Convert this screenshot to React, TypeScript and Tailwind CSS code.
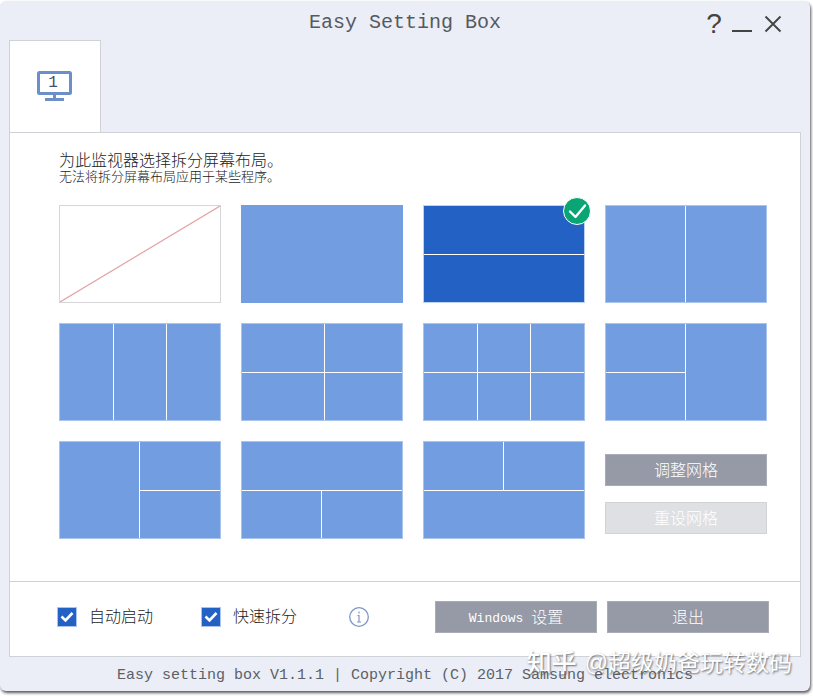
import { useState } from 'react'
import type { ReactNode } from 'react'
import clsx from 'clsx'

type Layout = {
  id: string
  label: string
  grid: string
  cells: string[]
}

const LAYOUTS: Layout[] = [
  { id: 'full', label: 'Full screen', grid: '', cells: [''] },
  { id: 'rows-2', label: 'Two rows', grid: 'grid-rows-[48fr_47fr]', cells: ['', ''] },
  { id: 'cols-2', label: 'Two columns', grid: 'grid-cols-[79fr_80fr]', cells: ['', ''] },
  { id: 'cols-3', label: 'Three columns', grid: 'grid-cols-[53fr_52fr_53fr]', cells: ['', '', ''] },
  {
    id: 'grid-4',
    label: 'Four panes',
    grid: 'grid-cols-[82fr_77fr] grid-rows-[48fr_47fr]',
    cells: ['', '', '', ''],
  },
  {
    id: 'grid-6',
    label: 'Six panes',
    grid: 'grid-cols-[53fr_52fr_53fr] grid-rows-[48fr_47fr]',
    cells: ['', '', '', '', '', ''],
  },
  {
    id: 'split-left',
    label: 'Left column split',
    grid: 'grid-cols-[79fr_80fr] grid-rows-[48fr_47fr]',
    cells: ['', 'row-span-2', ''],
  },
  {
    id: 'split-right',
    label: 'Right column split',
    grid: 'grid-cols-[79fr_80fr] grid-rows-[48fr_47fr]',
    cells: ['row-span-2', '', ''],
  },
  {
    id: 'split-bottom',
    label: 'Bottom row split',
    grid: 'grid-cols-[79fr_80fr] grid-rows-[48fr_47fr]',
    cells: ['col-span-2', '', ''],
  },
  {
    id: 'split-top',
    label: 'Top row split',
    grid: 'grid-cols-[79fr_80fr] grid-rows-[48fr_47fr]',
    cells: ['', '', 'col-span-2'],
  },
]

const MonitorIcon = () => (
  <svg width="36" height="31" viewBox="0 0 36 31" fill="none" stroke="#6c8fc9" aria-hidden="true">
    <rect x="1.5" y="1.5" width="32" height="21" rx="1" strokeWidth="3" />
    <path d="M17.5 24v4" strokeWidth="3" />
    <path d="M8 28.5h19" strokeWidth="3" />
  </svg>
)

const SelectedBadge = () => (
  <svg
    className="absolute -top-[9px] -right-[7px]"
    width="28"
    height="28"
    viewBox="0 0 28 28"
    fill="none"
    aria-hidden="true"
  >
    <circle cx="14" cy="14" r="13.5" fill="#0aa574" stroke="#fff" />
    <path
      d="M7 14.5l5.5 5.5L22 8.5"
      stroke="#fff"
      strokeWidth="2.4"
      strokeLinecap="round"
      strokeLinejoin="round"
    />
  </svg>
)

const LayoutTile = ({
  layout,
  selected,
  onSelect,
}: {
  layout: Layout
  selected: boolean
  onSelect: () => void
}) => (
  <button
    type="button"
    aria-label={layout.label}
    aria-pressed={selected}
    onClick={onSelect}
    className={clsx(
      'relative h-[98px] border',
      selected
        ? 'border-[#bcd2f3]'
        : layout.id === 'full'
          ? 'border-[#729de0]'
          : 'border-[#a9c5ee]'
    )}
  >
    <span className={clsx('grid h-full w-full gap-px bg-white', layout.grid)}>
      {layout.cells.map((span, i) => (
        <span key={i} className={clsx(span, selected ? 'bg-[#2461c5]' : 'bg-[#729de0]')} />
      ))}
    </span>
    {selected && <SelectedBadge />}
  </button>
)

const EmptyTile = ({ onSelect }: { onSelect: () => void }) => (
  <button
    type="button"
    aria-label="No layout"
    onClick={onSelect}
    className="h-[98px] border border-[#d6d6d8] bg-white"
  >
    <svg className="h-full w-full" viewBox="0 0 160 96" preserveAspectRatio="none" aria-hidden="true">
      <path d="M0 96L160 0" stroke="#e2a3a3" strokeWidth="1.2" />
    </svg>
  </button>
)

const ActionButton = ({
  children,
  disabled,
  className,
}: {
  children: ReactNode
  disabled?: boolean
  className?: string
}) => (
  <button
    type="button"
    disabled={disabled}
    className={clsx(
      'flex h-8 items-center justify-center border pt-0.5 text-base leading-none font-light text-white',
      disabled ? 'border-[#d2d3d6] bg-[#dfe0e4]' : 'border-[#a9abb5] bg-[#9699a6]',
      className
    )}
  >
    {children}
  </button>
)

const CheckOption = ({ id, label }: { id: string; label: string }) => {
  const [checked, setChecked] = useState(true)
  return (
    <div className="flex items-center gap-3">
      <span className="relative h-5 w-5">
        <input
          id={id}
          type="checkbox"
          checked={checked}
          onChange={(e) => setChecked(e.target.checked)}
          className="block h-5 w-5 appearance-none border border-[#a9c5ee] bg-white checked:bg-[#2461c5]"
        />
        {checked && (
          <svg
            className="pointer-events-none absolute inset-0"
            width="20"
            height="20"
            viewBox="0 0 20 20"
            fill="none"
            aria-hidden="true"
          >
            <path d="M4.5 9.5l4 4 7-7.5" stroke="#fff" strokeWidth="2.6" />
          </svg>
        )}
      </span>
      <label htmlFor={id} className="text-base leading-5 font-light text-[#222]">
        {label}
      </label>
    </div>
  )
}

const TitleBar = () => (
  <header className="grid h-[39px] grid-cols-[1fr_auto_1fr] items-center text-[#444]">
    <h1 className="col-start-2 pt-1 font-['Liberation_Mono',monospace] text-xl leading-6 text-[#555a60]">
      Easy Setting Box
    </h1>
    <div className="flex items-center justify-end gap-2.5 pt-1.5 pr-[19px]">
      <button
        type="button"
        aria-label="Help"
        className="w-4 font-['Liberation_Sans',sans-serif] text-[28px] leading-7"
      >
        ?
      </button>
      <button type="button" aria-label="Minimize">
        <svg width="20" height="20" viewBox="0 0 20 20" stroke="currentColor" strokeWidth="2">
          <path d="M0 17h20" />
        </svg>
      </button>
      <button type="button" aria-label="Close" className="pl-0.5">
        <svg width="18" height="18" viewBox="0 0 18 18" stroke="currentColor" strokeWidth="1.9">
          <path d="M1.5 1.5l15 15M16.5 1.5l-15 15" />
        </svg>
      </button>
    </div>
  </header>
)

function App() {
  const [selectedId, setSelectedId] = useState('rows-2')

  return (
    <div className="relative min-h-screen bg-white pt-px pr-[3px] font-['Liberation_Sans','Noto_Sans_CJK_SC',sans-serif]">
      <div className="rounded-md bg-[#ebeef6] px-[9px] shadow-[1px_2px_3px_rgba(0,0,0,0.65)]">
        <TitleBar />

        <nav className="flex">
          <button
            type="button"
            className="relative flex h-[92px] w-[92px] items-center justify-center border border-b-0 border-[#cfd2d6] bg-white"
          >
            <MonitorIcon />
            <span className="absolute inset-x-0 top-[34px] pr-1 text-center font-['Liberation_Mono',monospace] text-base leading-4 text-[#444f68]">
              1
            </span>
          </button>
        </nav>

        <main className="border border-[#cfd2d6] bg-white">
          <section className="pt-5 pr-[33px] pb-[42px] pl-[49px]">
            <h2 className="text-base leading-4 font-light text-[#222]">
              为此监视器选择拆分屏幕布局。
            </h2>
            <p className="text-[13px] leading-4 font-light text-[#222]">
              无法将拆分屏幕布局应用于某些程序。
            </p>

            <div className="mt-5 grid grid-cols-4 gap-5">
              <EmptyTile onSelect={() => setSelectedId('')} />
              {LAYOUTS.map((layout) => (
                <LayoutTile
                  key={layout.id}
                  layout={layout}
                  selected={layout.id === selectedId}
                  onSelect={() => setSelectedId(layout.id)}
                />
              ))}
              <div className="flex flex-col gap-4 pt-[13px]">
                <ActionButton>调整网格</ActionButton>
                <ActionButton disabled>重设网格</ActionButton>
              </div>
            </div>
          </section>

          <section className="flex items-center border-t border-[#cfd2d6] pt-[19px] pr-[31px] pb-[23px] pl-[47px]">
            <div className="flex items-center gap-12">
              <CheckOption id="auto-start" label="自动启动" />
              <CheckOption id="quick-split" label="快速拆分" />
              <button type="button" aria-label="Info" className="ml-1">
                <svg width="20" height="20" viewBox="0 0 20 20" fill="none" stroke="#7b98c8">
                  <circle cx="10" cy="10" r="9.3" strokeWidth="1.3" />
                  <path d="M10 4.5v2M8.5 8.5H10V15M8 15h4" strokeWidth="1.2" />
                </svg>
              </button>
            </div>
            <div className="ml-auto flex gap-2.5">
              <ActionButton className="w-[162px]">
                <span className="font-['Liberation_Mono',monospace] text-[13px] whitespace-pre">
                  {'Windows '}
                </span>
                设置
              </ActionButton>
              <ActionButton className="w-[162px]">退出</ActionButton>
            </div>
          </section>
        </main>

        <footer className="relative z-10 flex h-[34px] items-center justify-center pt-1 font-['Liberation_Mono',monospace] text-[15px] leading-5 whitespace-nowrap text-[#5c6067]">
          Easy setting box V1.1.1 | Copyright (C) 2017 Samsung electronics
        </footer>
      </div>

      {/* watermark sits between the panel and the footer text */}
      <div className="pointer-events-none absolute top-[648px] right-[21px] flex items-center gap-2 text-[23px] leading-[30px] whitespace-nowrap text-white [text-shadow:1px_1px_2px_rgba(0,0,0,0.55)]">
        <span className="text-[25px] font-medium">知乎</span>
        <span>@超级奶爸玩转数码</span>
      </div>
    </div>
  )
}

export default App
